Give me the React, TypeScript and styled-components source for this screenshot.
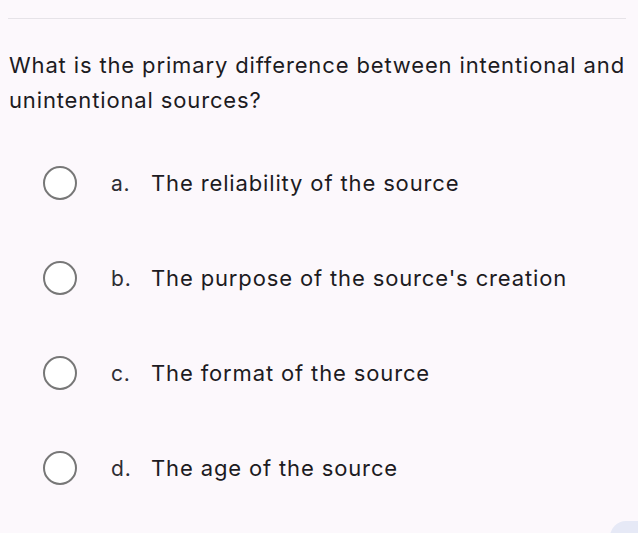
import React from 'react'
import styled, { createGlobalStyle } from 'styled-components'

const GlobalStyle = createGlobalStyle`
  html, body {
    margin: 0;
    padding: 0;
    background: #fcf8fc;
    font-family: Inter, "Noto Sans", sans-serif;
  }
`

const Page = styled.div`
  position: relative;
  height: 533px;
  overflow: hidden;
  padding: 18px 12px 0 8px;
  box-sizing: border-box;
`

const Divider = styled.hr`
  margin: 0;
  border: none;
  border-top: 1px solid #e6e3e8;
`

const Question = styled.p`
  margin: 29px 0 0 1px;
  font-size: 22px;
  line-height: 35px;
  letter-spacing: 0.86px;
  color: #1c1b22;
`

const Options = styled.div`
  display: flex;
  flex-direction: column;
  gap: 61px;
  margin-top: 48px;
  padding-left: 35px;
`

const Option = styled.label`
  display: flex;
  align-items: center;
  height: 34px;
  cursor: pointer;
`

const Radio = styled.span`
  width: 30px;
  height: 30px;
  border-radius: 50%;
  border: 2px solid #777;
  background: #fff;
  flex-shrink: 0;
`

const Letter = styled.span`
  width: 40px;
  margin-left: 34px;
  font-size: 21px;
  letter-spacing: 0.8px;
  color: #2e2e33;
`

const Answer = styled.span`
  font-size: 22px;
  letter-spacing: 0.86px;
  color: #1c1b22;
`

const Fab = styled.div`
  position: absolute;
  left: 610px;
  top: 521px;
  width: 60px;
  height: 60px;
  border-radius: 16px;
  background: #e6e9f6;
`

const options = [
  { letter: 'a.', text: 'The reliability of the source' },
  { letter: 'b.', text: "The purpose of the source's creation" },
  { letter: 'c.', text: 'The format of the source' },
  { letter: 'd.', text: 'The age of the source' },
]

export default function App() {
  return (
    <>
      <GlobalStyle />
      <Page>
        <Divider />
        <Question>
          What is the primary difference between intentional and unintentional sources?
        </Question>
        <Options>
          {options.map((o) => (
            <Option key={o.letter}>
              <Radio />
              <Letter>{o.letter}</Letter>
              <Answer>{o.text}</Answer>
            </Option>
          ))}
        </Options>
        <Fab />
      </Page>
    </>
  )
}
